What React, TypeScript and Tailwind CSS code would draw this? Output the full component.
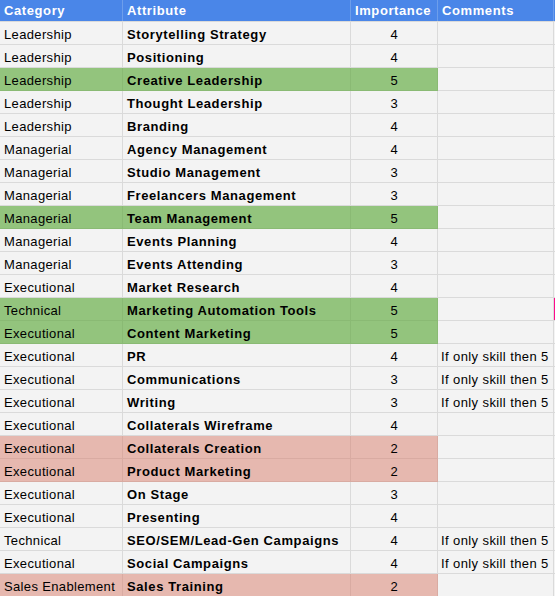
import React from "react";

type Highlight = "green" | "red" | undefined;

interface Row {
  category: string;
  attribute: string;
  importance: number;
  comment?: string;
  highlight?: Highlight;
  marker?: boolean;
}

const ONLY = "If only skill then 5";

const rows: Row[] = [
  { category: "Leadership", attribute: "Storytelling Strategy", importance: 4 },
  { category: "Leadership", attribute: "Positioning", importance: 4 },
  { category: "Leadership", attribute: "Creative Leadership", importance: 5, highlight: "green" },
  { category: "Leadership", attribute: "Thought Leadership", importance: 3 },
  { category: "Leadership", attribute: "Branding", importance: 4 },
  { category: "Managerial", attribute: "Agency Management", importance: 4 },
  { category: "Managerial", attribute: "Studio Management", importance: 3 },
  { category: "Managerial", attribute: "Freelancers Management", importance: 3 },
  { category: "Managerial", attribute: "Team Management", importance: 5, highlight: "green" },
  { category: "Managerial", attribute: "Events Planning", importance: 4 },
  { category: "Managerial", attribute: "Events Attending", importance: 3 },
  { category: "Executional", attribute: "Market Research", importance: 4 },
  { category: "Technical", attribute: "Marketing Automation Tools", importance: 5, highlight: "green", marker: true },
  { category: "Executional", attribute: "Content Marketing", importance: 5, highlight: "green" },
  { category: "Executional", attribute: "PR", importance: 4, comment: ONLY },
  { category: "Executional", attribute: "Communications", importance: 3, comment: ONLY },
  { category: "Executional", attribute: "Writing", importance: 3, comment: ONLY },
  { category: "Executional", attribute: "Collaterals Wireframe", importance: 4 },
  { category: "Executional", attribute: "Collaterals Creation", importance: 2, highlight: "red" },
  { category: "Executional", attribute: "Product Marketing", importance: 2, highlight: "red" },
  { category: "Executional", attribute: "On Stage", importance: 3 },
  { category: "Executional", attribute: "Presenting", importance: 4 },
  { category: "Technical", attribute: "SEO/SEM/Lead-Gen Campaigns", importance: 4, comment: ONLY },
  { category: "Executional", attribute: "Social Campaigns", importance: 4, comment: ONLY },
  { category: "Sales Enablement", attribute: "Sales Training", importance: 2, highlight: "red" },
];

const cellBg = (h: Highlight) => {
  if (h === "green") return "bg-[#93c47d] border-[#8aba74]";
  if (h === "red") return "bg-[#e6b8af] border-[#d9aba2]";
  return "bg-[#f3f3f3] border-[#dadada]";
};

export default function App() {
  return (
    <div
      className="w-[555px] h-[596px] overflow-hidden bg-[#f3f3f3] text-[13px] leading-[15px] text-black"
      style={{ fontFamily: '"Liberation Sans", Arial, sans-serif' }}
    >
      {/* Header */}
      <div className="flex h-[22px] bg-[#4a86e8] border-b border-[#dadada] font-bold text-white tracking-[0.6px]">
        <div className="w-[123px] border-r border-[#6d9eeb] flex items-end pb-[3px] pl-[4px]">Category</div>
        <div className="w-[228px] border-r border-[#6d9eeb] flex items-end pb-[3px] pl-[4px]">Attribute</div>
        <div className="w-[87px] border-r border-[#6d9eeb] flex items-end pb-[3px] pl-[4px]">Importance</div>
        <div className="w-[116px] border-r border-[#6d9eeb] flex items-end pb-[3px] pl-[4px]">Comments</div>
        <div className="w-[1px]" />
      </div>

      {/* Rows */}
      {rows.map((row) => (
        <div key={row.attribute} className="flex h-[23px]">
          <div
            className={`w-[123px] border-r border-b flex items-end pb-[2px] pl-[4px] whitespace-nowrap overflow-hidden tracking-[0.35px] ${cellBg(row.highlight)}`}
          >
            {row.category}
          </div>
          <div
            className={`w-[228px] border-r border-b flex items-end pb-[2px] pl-[4px] whitespace-nowrap overflow-hidden font-bold tracking-[0.6px] ${cellBg(row.highlight)}`}
          >
            {row.attribute}
          </div>
          <div
            className={`w-[87px] border-r border-b flex items-end justify-center pb-[2px] ${cellBg(row.highlight)}`}
          >
            {row.importance}
          </div>
          <div className="w-[116px] border-r border-b border-[#dadada] bg-[#f3f3f3] flex items-end pb-[2px] pl-[3px] whitespace-nowrap overflow-hidden tracking-[0.4px]">
            {row.comment}
          </div>
          <div className={`w-[1px] border-b border-[#dadada] ${row.marker ? "bg-[#ff0a8c]" : "bg-[#f3f3f3]"}`} />
        </div>
      ))}
    </div>
  );
}
